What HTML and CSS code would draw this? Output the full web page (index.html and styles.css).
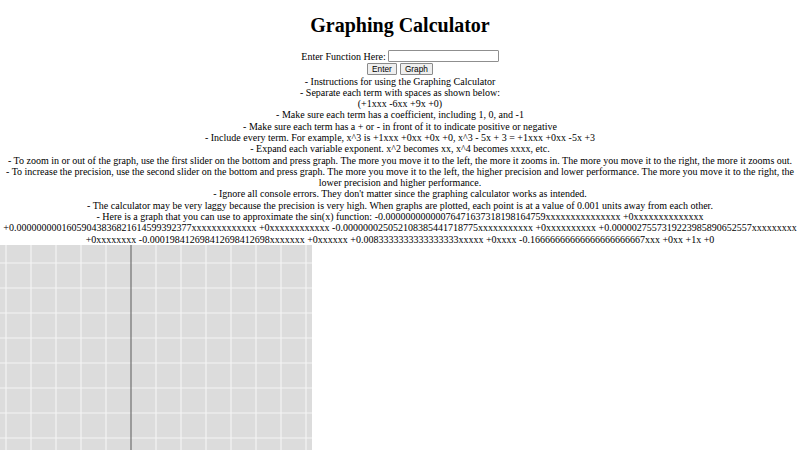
FILE: index.html
```
<!DOCTYPE html>
<html>
<head>
<meta charset="utf-8">
<link rel="stylesheet" href="styles.css">
</head>
<body>
<h1 class="title">Graphing Calculator</h1>
<div class="entry">
  <span class="entry-label">Enter Function Here:</span>
  <input class="fn-input" type="text">
</div>
<div class="buttons">
  <button class="btn">Enter</button>
  <button class="btn">Graph</button>
</div>
<div class="instructions">
  <div>- Instructions for using the Graphing Calculator</div>
  <div>- Separate each term with spaces as shown below:</div>
  <div>(+1xxx -6xx +9x +0)</div>
  <div>- Make sure each term has a coefficient, including 1, 0, and -1</div>
  <div>- Make sure each term has a + or - in front of it to indicate positive or negative</div>
  <div>- Include every term. For example, x^3 is +1xxx +0xx +0x +0, x^3 - 5x + 3 = +1xxx +0xx -5x +3</div>
  <div>- Expand each variable exponent. x^2 becomes xx, x^4 becomes xxxx, etc.</div>
  <div>- To zoom in or out of the graph, use the first slider on the bottom and press graph. The more you move it to the left, the more it zooms in. The more you move it to the right, the more it zooms out.</div>
  <div>- To increase the precision, use the second slider on the bottom and press graph. The more you move it to the left, the higher precision and lower performance. The more you move it to the right, the lower precision and higher performance.</div>
  <div>- Ignore all console errors. They don't matter since the graphing calculator works as intended.</div>
  <div>- The calculator may be very laggy because the precision is very high. When graphs are plotted, each point is at a value of 0.001 units away from each other.</div>
  <div>- Here is a graph that you can use to approximate the sin(x) function: -0.00000000000076471637318198164759xxxxxxxxxxxxxxx +0xxxxxxxxxxxxxx +0.00000000016059043836821614599392377xxxxxxxxxxxxx +0xxxxxxxxxxxx -0.000000025052108385441718775xxxxxxxxxxx +0xxxxxxxxxx +0.0000027557319223985890652557xxxxxxxxx +0xxxxxxxx -0.000198412698412698412698xxxxxxx +0xxxxxx +0.0083333333333333333xxxxx +0xxxx -0.16666666666666666666667xxx +0xx +1x +0</div>
</div>
<div class="graph">
  <svg class="graph-svg" width="312" height="220" viewBox="0 0 312 220">
    <rect x="0" y="0" width="312" height="220" fill="#dcdcdc"/>
    <g stroke="#f4f4f4" stroke-width="1.2">
      <line x1="6" y1="0" x2="6" y2="220"/>
      <line x1="31" y1="0" x2="31" y2="220"/>
      <line x1="56" y1="0" x2="56" y2="220"/>
      <line x1="81" y1="0" x2="81" y2="220"/>
      <line x1="106" y1="0" x2="106" y2="220"/>
      <line x1="156" y1="0" x2="156" y2="220"/>
      <line x1="181" y1="0" x2="181" y2="220"/>
      <line x1="206" y1="0" x2="206" y2="220"/>
      <line x1="231" y1="0" x2="231" y2="220"/>
      <line x1="256" y1="0" x2="256" y2="220"/>
      <line x1="281" y1="0" x2="281" y2="220"/>
      <line x1="306" y1="0" x2="306" y2="220"/>
      <line x1="0" y1="18" x2="312" y2="18"/>
      <line x1="0" y1="43" x2="312" y2="43"/>
      <line x1="0" y1="68" x2="312" y2="68"/>
      <line x1="0" y1="93" x2="312" y2="93"/>
      <line x1="0" y1="118" x2="312" y2="118"/>
      <line x1="0" y1="143" x2="312" y2="143"/>
      <line x1="0" y1="168" x2="312" y2="168"/>
      <line x1="0" y1="193" x2="312" y2="193"/>
      <line x1="0" y1="218" x2="312" y2="218"/>
    </g>
    <line x1="131" y1="0" x2="131" y2="220" stroke="#6e6e6e" stroke-width="1.2"/>
  </svg>
</div>
</body>
</html>
```
FILE: styles.css
```
html, body {
  margin: 0;
  padding: 0;
  background: #ffffff;
}
body {
  font-family: "Liberation Serif", "Times New Roman", serif;
  color: #000;
  text-align: center;
  font-size: 10px;
  line-height: 11.3px;
}
.title {
  font-size: 20px;
  font-weight: bold;
  line-height: 23px;
  margin: 13.5px 0 13px 0;
}
.entry {
  display: flex;
  justify-content: center;
  align-items: center;
  gap: 2px;
  height: 13.5px;
  font-size: 10px;
}
.fn-input {
  box-sizing: border-box;
  width: 111px;
  height: 12px;
  padding: 0 1px;
  margin: 0;
  border: 1px solid #8f8f8f;
  border-radius: 1px;
  font-size: 8px;
}
.buttons {
  display: flex;
  justify-content: center;
  align-items: flex-start;
  gap: 3px;
  height: 12.5px;
}
.btn {
  box-sizing: border-box;
  font-family: "Liberation Sans", Arial, sans-serif;
  font-size: 8.3px;
  height: 12px;
  padding: 0 4px;
  margin: 0;
  background: #efefef;
  border: 1px solid #8a8a8a;
  border-radius: 1px;
  color: #000;
  line-height: 10px;
}
.instructions {
  font-size: 10px;
  line-height: 11.3px;
}
.graph {
  text-align: left;
  line-height: 0;
}
.graph-svg {
  display: block;
}
```
